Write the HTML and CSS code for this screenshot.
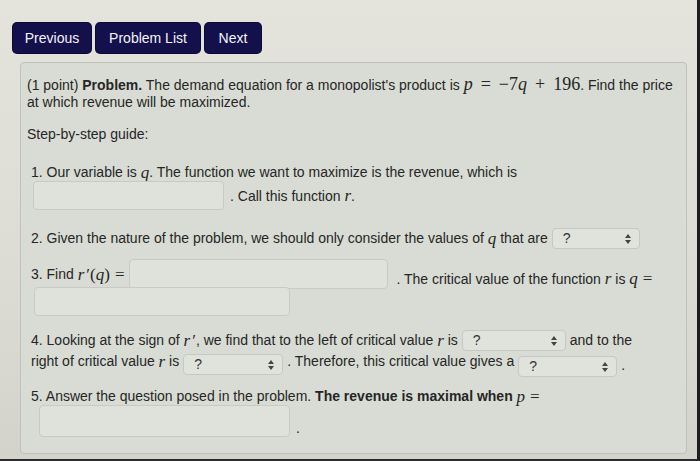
FILE: index.html
```html
<!DOCTYPE html>
<html>
<head>
<meta charset="utf-8">
<link rel="stylesheet" href="styles.css">
</head>
<body>
<div class="screen">
  <nav class="nav">
    <button class="btn btn-prev">Previous</button>
    <button class="btn btn-list">Problem List</button>
    <button class="btn btn-next">Next</button>
  </nav>
  <section class="problem">
    <p class="intro">(1 point) <b>Problem.</b> The demand equation for a monopolist's product is <span class="m big">p</span><span class="op wide">=</span><span class="mr big">−7</span><span class="m big">q</span><span class="op wide">+</span><span class="mr big">196</span>. Find the price<br>at which revenue will be maximized.</p>
    <p class="guide">Step-by-step guide:</p>

    <div class="item item1">
      <div class="line">1. Our variable is&nbsp;<span class="m">q</span>. The function we want to maximize is the revenue, which is</div>
      <div class="line">
        <span class="input in1"></span>
        <span class="after">. Call this function&nbsp;<span class="m">r</span>.</span>
      </div>
    </div>

    <div class="item item2">
      <div class="line">2. Given the nature of the problem, we should only consider the values of&nbsp;<span class="m">q</span>&nbsp;that are
        <span class="select sel2"><span class="q">?</span><span class="arr"><i class="up"></i><i class="dn"></i></span></span>
      </div>
    </div>

    <div class="item item3">
      <div class="line">3. Find&nbsp;<span class="m">r</span><span class="mr prime">′</span><span class="mr">(</span><span class="m">q</span><span class="mr">)</span><span class="op">=</span>
        <span class="input in3a"></span>
        <span class="after3">. The critical value of the function&nbsp;<span class="m">r</span>&nbsp;is&nbsp;<span class="m">q</span><span class="op">=</span></span>
      </div>
      <div class="line"><span class="input in3b"></span></div>
    </div>

    <div class="item item4">
      <div class="line">4. Looking at the sign of&nbsp;<span class="m">r</span><span class="mr prime">′</span>, we find that to the left of critical value&nbsp;<span class="m">r</span>&nbsp;is
        <span class="select sel4a"><span class="q">?</span><span class="arr"><i class="up"></i><i class="dn"></i></span></span>
        <span class="tail">and to the</span>
      </div>
      <div class="line l2">right of critical value&nbsp;<span class="m">r</span>&nbsp;is
        <span class="select sel4b"><span class="q">?</span><span class="arr"><i class="up"></i><i class="dn"></i></span></span>
        <span class="tail2">. Therefore, this critical value gives a</span>
        <span class="select sel4c"><span class="q">?</span><span class="arr"><i class="up"></i><i class="dn"></i></span></span>
        <span class="dot">.</span>
      </div>
    </div>

    <div class="item item5">
      <div class="line">5. Answer the question posed in the problem.&nbsp;<b>The revenue is maximal when</b>&nbsp;<span class="m">p</span><span class="op">=</span></div>
      <div class="line"><span class="input in5"></span><span class="dot5">.</span></div>
    </div>
  </section>
</div>
</body>
</html>
```

FILE: styles.css
```css
html, body {
  margin: 0;
  padding: 0;
}
body {
  width: 700px;
  height: 461px;
  overflow: hidden;
  background: #d6d6ce;
  font-family: "Liberation Sans", Arial, sans-serif;
  font-size: 14px;
  color: #262626;
}
.screen {
  width: 697px;
  height: 459px;
  background: linear-gradient(180deg, #e4e4dd 0%, #dcdcd4 60%, #d3d3cb 100%);
  border-right: 3px solid #1d1d1f;
  border-bottom: 2px solid #2a2a2c;
  box-sizing: content-box;
  overflow: hidden;
}
.nav {
  display: flex;
  gap: 5px;
  padding: 23px 0 0 13px;
}
.btn {
  height: 30px;
  border: none;
  border-radius: 4px;
  background: #14104c;
  color: #f4f4f8;
  font-family: "Liberation Sans", Arial, sans-serif;
  font-size: 14px;
  padding: 0;
  box-shadow: 0 0 0 1px #0c0a33;
}
.btn-prev { width: 78px; }
.btn-list { width: 104px; }
.btn-next { width: 56px; }

.problem {
  margin: 9px 0 0 20px;
  width: 667px;
  height: 392px;
  box-sizing: border-box;
  background: #d8dcd4;
  border: 1px solid #bfc2bb;
  border-radius: 4px;
  padding: 13px 8px 0 6px;
}
.problem p { margin: 0; }
.intro { line-height: 17px; }
.guide { margin-top: 15px !important; line-height: 17px; }

.m {
  font-family: "Liberation Serif", "Times New Roman", serif;
  font-style: italic;
  font-size: 17px;
}
.mr {
  font-family: "Liberation Serif", "Times New Roman", serif;
  font-size: 17px;
}
.big { font-size: 18px; }
.prime { margin-left: 2px; }
.op {
  font-family: "Liberation Serif", "Times New Roman", serif;
  font-size: 17px;
  margin: 0 5px;
}
.op.wide { font-size: 18px; margin: 0 8px; }

.item { padding-left: 4px; }
.line {
  display: flex;
  align-items: center;
  white-space: nowrap;
  line-height: 17px;
}
.item1 { margin-top: 21px; }

.input {
  display: inline-block;
  background: #dfe2db;
  border: 1px solid #c8cbc4;
  border-radius: 4px;
  box-sizing: border-box;
}
.in1 { width: 191px; height: 29px; margin-left: 2px; }
.after { margin-left: 6px; }

.item2 { margin-top: 18px; }
.select {
  display: inline-flex;
  align-items: center;
  justify-content: space-between;
  box-sizing: border-box;
  height: 21px;
  background: #e0e3dc;
  border: 1px solid #c6c9c2;
  border-radius: 4px;
  padding: 0 8px 0 10px;
}
.select .q { font-size: 14px; color: #333; }
.arr {
  display: flex;
  flex-direction: column;
  gap: 2px;
}
.arr i {
  display: block;
  width: 0;
  height: 0;
  border-left: 3px solid transparent;
  border-right: 3px solid transparent;
}
.arr .up { border-bottom: 4px solid #444; }
.arr .dn { border-top: 4px solid #444; }
.sel2 { width: 88px; margin-left: 4px; }

.item3 { margin-top: 10px; }
.in3a { width: 259px; height: 30px; margin-left: 0; }
.after3 { margin-left: 8px; margin-top: 10px; }
.in3b { width: 256px; height: 29px; margin-left: 3px; margin-top: -2px; }

.item4 { margin-top: 14px; }
.sel4a { width: 104px; margin-left: 4px; }
.tail { margin-left: 4px; }
.item4 .l2 { margin-top: -5px; }
.sel4b { width: 100px; margin-left: 4px; margin-top: 6px; }
.tail2 { margin-left: 4px; }
.sel4c { width: 99px; margin-left: 4px; margin-top: 10px; }
.dot { margin-left: 4px; margin-top: 8px; }

.item5 { margin-top: 11px; }
.in5 { width: 251px; height: 32px; margin-left: 8px; margin-top: 0; }
.dot5 { margin-left: 6px; margin-top: 14px; }
```
